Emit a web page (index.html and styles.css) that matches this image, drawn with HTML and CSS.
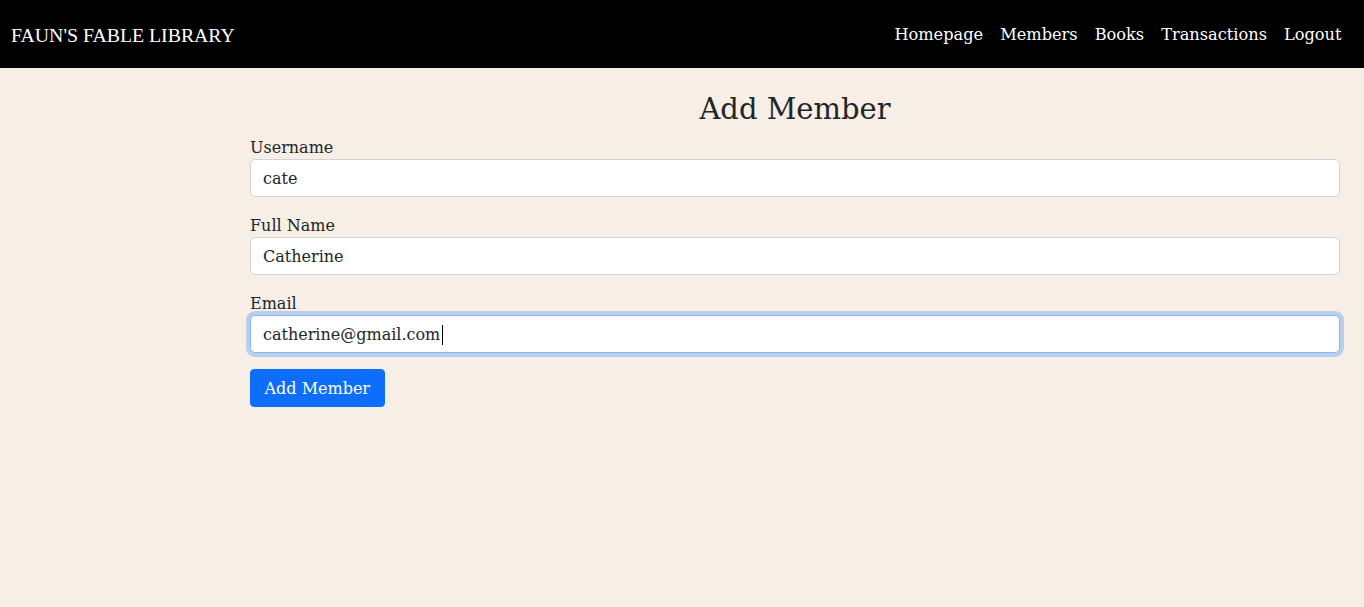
FILE: index.html
```html
<!DOCTYPE html>
<html lang="en">
<head>
<meta charset="utf-8">
<title>Add Member</title>
<link rel="stylesheet" href="styles.css">
</head>
<body>
<nav class="navbar">
  <a class="brand" href="#">FAUN'S FABLE LIBRARY</a>
  <ul class="nav-links">
    <li><a href="#">Homepage</a></li>
    <li><a href="#">Members</a></li>
    <li><a href="#">Books</a></li>
    <li><a href="#">Transactions</a></li>
    <li><a href="#">Logout</a></li>
  </ul>
</nav>
<main class="content">
  <h2 class="title">Add Member</h2>
  <form class="form">
    <div class="group">
      <label class="label" for="username">Username</label>
      <input class="control" id="username" type="text" value="cate">
    </div>
    <div class="group">
      <label class="label" for="fullname">Full Name</label>
      <input class="control" id="fullname" type="text" value="Catherine">
    </div>
    <div class="group">
      <label class="label" for="email">Email</label>
      <div class="field-wrap">
        <input class="control focused" id="email" type="email" value="catherine@gmail.com">
        <span class="caret"></span>
      </div>
    </div>
    <button class="btn" type="button">Add Member</button>
  </form>
</main>
</body>
</html>
```
FILE: styles.css
```css
* { box-sizing: border-box; }
html, body { margin: 0; padding: 0; }
body {
  background: #f7efe5;
  color: #212529;
  font-family: "DejaVu Serif", "Liberation Serif", serif;
  font-size: 16px;
  line-height: 1.5;
  height: 607px;
  overflow: hidden;
}
.navbar {
  background: #000;
  height: 68px;
  display: flex;
  align-items: center;
  justify-content: space-between;
  padding: 0 14px 0 11px;
}
.brand {
  color: #fff;
  text-decoration: none;
  font-family: "Liberation Serif", serif;
  font-size: 19.8px;
  padding-top: 4px;
}
.nav-links {
  list-style: none;
  display: flex;
  margin: 0;
  padding: 3px 0 0;
}
.nav-links a {
  display: block;
  color: #fff;
  text-decoration: none;
  font-size: 16.2px;
  padding: 0 8.5px;
}
.content {
  margin: 0 24px 0 250px;
}
.title {
  font-weight: 400;
  font-size: 29px;
  line-height: 1.2;
  text-align: center;
  margin: 24px 0 8px;
}
.form { margin: 0; }
.group { margin-bottom: 16px; }
.label {
  display: block;
  line-height: 24px;
  padding-top: 1px;
  height: 24px;
}
.field-wrap { position: relative; }
.control {
  display: block;
  width: 100%;
  height: 38px;
  padding: 7px 12px 5px;
  font-family: inherit;
  font-size: 16px;
  color: #212529;
  background: #fff;
  border: 1px solid #ced4da;
  border-radius: 5px;
  outline: none;
}
.control.focused {
  border-color: #86b7fe;
  box-shadow: 0 0 0 4px rgba(13, 110, 253, 0.25);
}
.caret {
  position: absolute;
  left: 192px;
  top: 10px;
  width: 1px;
  height: 20px;
  background: #000;
}
.btn {
  display: inline-block;
  height: 38px;
  padding: 7px 13.5px 5px;
  font-family: inherit;
  font-size: 16px;
  color: #fff;
  background: #0d6efd;
  border: 1px solid #0d6efd;
  border-radius: 4px;
}
```
